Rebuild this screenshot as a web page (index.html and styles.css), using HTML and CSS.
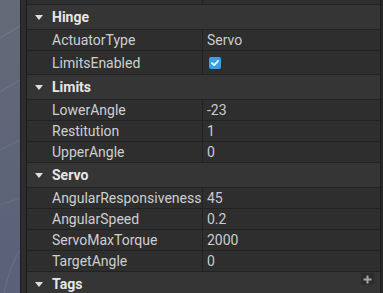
FILE: index.html
```html
<!DOCTYPE html>
<html lang="en">
<head>
    <meta charset="UTF-8">
    <title>Properties</title>
    <link rel="stylesheet" href="styles.css">
</head>
<body>
    <div class="viewport">
        <svg width="20" height="293" viewBox="0 0 20 293">
            <line x1="0" y1="38" x2="20" y2="26" stroke="#767c8c" stroke-width="1"/>
            <line x1="0" y1="92" x2="20" y2="80" stroke="#70778a" stroke-width="1"/>
            <line x1="0" y1="150" x2="20" y2="140" stroke="#6b7286" stroke-width="1"/>
            <line x1="0" y1="205" x2="20" y2="198" stroke="#687084" stroke-width="1"/>
            <path d="M4 293 Q10 265 20 250" fill="none" stroke="#6a7186" stroke-width="1"/>
        </svg>
    </div>
    <div class="splitter"></div>
    <div class="panel">
        <div class="row partial">
            <div class="name"></div>
            <div class="value"></div>
        </div>

        <div class="section">
            <span class="arrow"></span>Hinge
        </div>
        <div class="row">
            <div class="name">ActuatorType</div>
            <div class="value">Servo</div>
        </div>
        <div class="row tall">
            <div class="name">LimitsEnabled</div>
            <div class="value"><span class="checkbox">
                <svg width="12" height="12" viewBox="0 0 12 12"><path d="M3 6.2 L5.2 8.2 L9 4" fill="none" stroke="#fff" stroke-width="1.8" stroke-linecap="round" stroke-linejoin="round"/></svg>
            </span></div>
        </div>

        <div class="section">
            <span class="arrow"></span>Limits
        </div>
        <div class="row">
            <div class="name">LowerAngle</div>
            <div class="value">-23</div>
        </div>
        <div class="row">
            <div class="name">Restitution</div>
            <div class="value">1</div>
        </div>
        <div class="row">
            <div class="name">UpperAngle</div>
            <div class="value">0</div>
        </div>

        <div class="section">
            <span class="arrow"></span>Servo
        </div>
        <div class="row">
            <div class="name">AngularResponsiveness</div>
            <div class="value">45</div>
        </div>
        <div class="row">
            <div class="name">AngularSpeed</div>
            <div class="value">0.2</div>
        </div>
        <div class="row">
            <div class="name">ServoMaxTorque</div>
            <div class="value">2000</div>
        </div>
        <div class="row">
            <div class="name">TargetAngle</div>
            <div class="value">0</div>
        </div>

        <div class="section">
            <span class="arrow"></span>Tags
            <button class="add-tag" type="button">
                <svg width="9" height="9" viewBox="0 0 9 9"><path d="M4.5 0.5 V8.5 M0.5 4.5 H8.5" stroke="#a8a8a8" stroke-width="2"/></svg>
            </button>
        </div>
    </div>
    <div class="edge"></div>
</body>
</html>
```

FILE: styles.css
```css
html, body {
    margin: 0;
    height: 100%;
}

body {
    display: flex;
    height: 293px;
    overflow: hidden;
    background: #2e2e2e;
    font-family: Roboto, "Noto Sans", sans-serif;
    font-size: 14px;
    color: #cccccc;
}

.viewport {
    width: 20px;
    flex-shrink: 0;
    background: linear-gradient(180deg, #656a78 0%, #5e6478 60%, #5a6078 100%);
}

.viewport svg {
    display: block;
}

.splitter {
    width: 5px;
    flex-shrink: 0;
    background: #2d2d2d;
    border-left: 1px solid #1d1d1d;
    border-right: 1px solid #1b1b1b;
}

.panel {
    flex: 1;
    display: flex;
    flex-direction: column;
    background: #2e2e2e;
}

.edge {
    width: 2px;
    flex-shrink: 0;
    background: #262626;
    border-left: 1px solid #1f1f1f;
}

.row {
    display: grid;
    grid-template-columns: 176px 1fr;
    height: 20px;
    flex-shrink: 0;
    border-bottom: 1px solid #222222;
}

.row.partial {
    height: 4px;
}

.row.tall {
    height: 23px;
}

.name {
    display: flex;
    align-items: center;
    padding-left: 25px;
    border-right: 1px solid #222222;
    white-space: nowrap;
    color: #cfcfcf;
}

.value {
    display: flex;
    align-items: center;
    padding-left: 4px;
    color: #cccccc;
}

.checkbox {
    display: flex;
    align-items: center;
    justify-content: center;
    width: 12px;
    height: 12px;
    margin-left: 2px;
    border-radius: 2px;
    background: #3a9fe6;
}

.checkbox svg {
    display: block;
}

.section {
    position: relative;
    display: flex;
    align-items: center;
    height: 24px;
    flex-shrink: 0;
    padding-left: 25px;
    background: #353535;
    border-bottom: 1px solid #222222;
    font-weight: bold;
    color: #e6e6e6;
}

.arrow {
    position: absolute;
    left: 8px;
    top: 10px;
    width: 0;
    height: 0;
    border-left: 4px solid transparent;
    border-right: 4px solid transparent;
    border-top: 5px solid #e0e0e0;
}

.add-tag {
    position: absolute;
    right: 6px;
    top: 1px;
    width: 13px;
    height: 12px;
    padding: 0;
    border: none;
    background: #2c2c2c;
    display: flex;
    align-items: center;
    justify-content: center;
}

.add-tag svg {
    display: block;
}
```
